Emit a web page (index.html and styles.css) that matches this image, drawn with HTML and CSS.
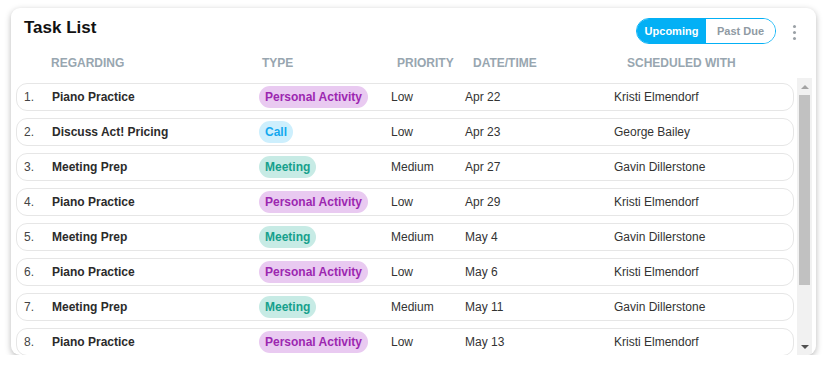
FILE: index.html
```html
<!DOCTYPE html>
<html lang="en">

<head>
  <meta charset="UTF-8">
  <meta name="viewport" content="width=device-width, initial-scale=1.0">
  <title>Task List</title>
  <link rel="stylesheet" href="styles.css">
</head>

<body>
  <div class="card">
    <div class="card-top">
      <h2 class="title">Task List</h2>
      <div class="top-actions">
        <div class="toggle">
          <button class="toggle-btn active">Upcoming</button>
          <button class="toggle-btn">Past Due</button>
        </div>
        <div class="kebab">
          <span></span><span></span><span></span>
        </div>
      </div>
    </div>

    <div class="col-head">
      <div>REGARDING</div>
      <div>TYPE</div>
      <div>PRIORITY</div>
      <div>DATE/TIME</div>
      <div>SCHEDULED WITH</div>
    </div>

    <div class="list-wrap">
      <div class="task-list">
        <div class="task-row">
          <div class="num">1.</div>
          <div class="regarding">Piano Practice</div>
          <div><span class="badge personal">Personal Activity</span></div>
          <div>Low</div>
          <div>Apr 22</div>
          <div>Kristi Elmendorf</div>
        </div>
        <div class="task-row">
          <div class="num">2.</div>
          <div class="regarding">Discuss Act! Pricing</div>
          <div><span class="badge call">Call</span></div>
          <div>Low</div>
          <div>Apr 23</div>
          <div>George Bailey</div>
        </div>
        <div class="task-row">
          <div class="num">3.</div>
          <div class="regarding">Meeting Prep</div>
          <div><span class="badge meeting">Meeting</span></div>
          <div>Medium</div>
          <div>Apr 27</div>
          <div>Gavin Dillerstone</div>
        </div>
        <div class="task-row">
          <div class="num">4.</div>
          <div class="regarding">Piano Practice</div>
          <div><span class="badge personal">Personal Activity</span></div>
          <div>Low</div>
          <div>Apr 29</div>
          <div>Kristi Elmendorf</div>
        </div>
        <div class="task-row">
          <div class="num">5.</div>
          <div class="regarding">Meeting Prep</div>
          <div><span class="badge meeting">Meeting</span></div>
          <div>Medium</div>
          <div>May 4</div>
          <div>Gavin Dillerstone</div>
        </div>
        <div class="task-row">
          <div class="num">6.</div>
          <div class="regarding">Piano Practice</div>
          <div><span class="badge personal">Personal Activity</span></div>
          <div>Low</div>
          <div>May 6</div>
          <div>Kristi Elmendorf</div>
        </div>
        <div class="task-row">
          <div class="num">7.</div>
          <div class="regarding">Meeting Prep</div>
          <div><span class="badge meeting">Meeting</span></div>
          <div>Medium</div>
          <div>May 11</div>
          <div>Gavin Dillerstone</div>
        </div>
        <div class="task-row">
          <div class="num">8.</div>
          <div class="regarding">Piano Practice</div>
          <div><span class="badge personal">Personal Activity</span></div>
          <div>Low</div>
          <div>May 13</div>
          <div>Kristi Elmendorf</div>
        </div>
      </div>

      <div class="scrollbar">
        <div class="scroll-btn"><span class="arrow-up"></span></div>
        <div class="scroll-track">
          <div class="scroll-thumb"></div>
        </div>
        <div class="scroll-btn"><span class="arrow-down"></span></div>
      </div>
    </div>
  </div>
</body>

</html>
```

FILE: styles.css
```css
body {
  font-family: 'Liberation Sans', Arial, sans-serif;
  margin: 0;
  padding: 0;
  background-color: #ffffff;
  color: #333333;
}

.card {
  width: 805px;
  height: 347px;
  margin: 8px 0 0 11px;
  background-color: #ffffff;
  border-radius: 9px;
  box-shadow: 0 2px 6px rgba(0, 0, 0, 0.28);
  overflow: hidden;
  display: flex;
  flex-direction: column;
}

.card-top {
  display: flex;
  justify-content: space-between;
  align-items: flex-start;
  padding: 10px 20px 0 13px;
  height: 26px;
}

.title {
  margin: 0;
  font-size: 17px;
  font-weight: bold;
  color: #111111;
  line-height: 20px;
}

.top-actions {
  display: flex;
  align-items: center;
  gap: 17px;
}

.toggle {
  display: flex;
  height: 26px;
  box-sizing: border-box;
  border: 1px solid #03b0f5;
  border-radius: 13px;
  overflow: hidden;
}

.toggle-btn {
  border: none;
  background-color: #ffffff;
  color: #8f9aa3;
  font-family: inherit;
  font-size: 11px;
  font-weight: bold;
  padding: 0;
  width: 69px;
  cursor: pointer;
}

.toggle-btn.active {
  background-color: #03b0f5;
  color: #ffffff;
}

.kebab {
  display: flex;
  flex-direction: column;
  gap: 3px;
  width: 3px;
  padding-top: 2px;
}

.kebab span {
  width: 3px;
  height: 3px;
  border-radius: 50%;
  background-color: #9aa0a6;
}

.col-head {
  display: grid;
  grid-template-columns: 211px 135px 76px 154px 1fr;
  padding-left: 40px;
  margin-top: 11px;
  height: 16px;
  font-size: 12px;
  font-weight: bold;
  color: #98a6b0;
  line-height: 16px;
}

.list-wrap {
  display: flex;
  flex: 1;
  min-height: 0;
  margin-top: 7px;
  margin-right: 4px;
}

.task-list {
  flex: 1;
  overflow: hidden;
  padding: 5px 3px 0 5px;
}

.scrollbar {
  width: 15px;
  display: flex;
  flex-direction: column;
  background-color: #f1f1f1;
}

.scroll-btn {
  height: 17px;
  display: flex;
  align-items: center;
  justify-content: center;
}

.arrow-up {
  width: 0;
  height: 0;
  border-left: 4px solid transparent;
  border-right: 4px solid transparent;
  border-bottom: 4px solid #a3a3a3;
}

.arrow-down {
  width: 0;
  height: 0;
  border-left: 4px solid transparent;
  border-right: 4px solid transparent;
  border-top: 4px solid #505050;
}

.scroll-track {
  flex: 1;
  padding: 0 2px;
}

.scroll-thumb {
  height: 190px;
  background-color: #c1c1c1;
}

.task-row {
  display: grid;
  grid-template-columns: 28px 207px 132px 74px 149px 1fr;
  align-items: center;
  box-sizing: border-box;
  height: 28px;
  margin-bottom: 7px;
  padding-left: 7px;
  border: 1px solid #e6e6e6;
  border-radius: 11px;
  font-size: 12px;
  color: #333333;
}

.num {
  color: #444444;
}

.regarding {
  font-weight: bold;
  color: #2b2b2b;
}

.badge {
  display: inline-block;
  height: 22px;
  line-height: 22px;
  padding: 0 6px;
  border-radius: 11px;
  font-weight: bold;
  font-size: 12px;
}

.personal {
  background-color: #e9caf1;
  color: #9c27b0;
}

.call {
  background-color: #cdeffd;
  color: #14a8ef;
}

.meeting {
  background-color: #c7ebe5;
  color: #16a08c;
}
```
